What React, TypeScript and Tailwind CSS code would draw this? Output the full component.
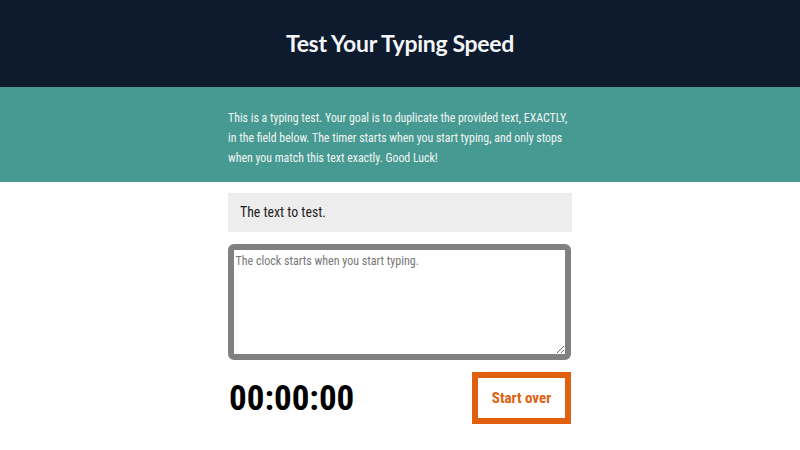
import React from "react";

const title = { fontFamily: "Lato, 'Open Sans', sans-serif" };
const body = { fontFamily: "'Roboto Condensed', Roboto, sans-serif" };

export default function App() {
  return (
    <div className="w-[800px] h-[450px] bg-white overflow-hidden" style={body}>
      <header className="h-[87px] bg-[#0e1b2f] flex items-center justify-center">
        <h1 className="text-[23px] font-bold text-[#f4f6f8] tracking-[-0.3px]" style={title}>
          Test Your Typing Speed
        </h1>
      </header>
      <section className="h-[95px] bg-[#469a92] pt-[21px]">
        <p className="w-[344px] mx-auto text-[11.85px] leading-[20px] text-[#f2f5f4] whitespace-nowrap">
          This is a typing test. Your goal is to duplicate the provided text, EXACTLY,
          <br />
          in the field below. The timer starts when you start typing, and only stops
          <br />
          when you match this text exactly. Good Luck!
        </p>
      </section>
      <main className="w-[344px] mx-auto">
        <div className="mt-[11px] h-[39px] bg-[#ededed] px-3 flex items-center text-[13.8px] text-[#222]">
          The text to test.
        </div>
        <div className="mt-[12px]">
          <textarea
            className="block w-[343px] h-[116px] border-[6px] border-[#808080] rounded-[6px] pl-[1.5px] pt-[2px] text-[12px] leading-[18px] text-[#333] placeholder:text-[#777] outline-none"
            style={body}
            placeholder="The clock starts when you start typing."
          />
        </div>
        <div className="mt-[12px] flex items-center justify-between">
          <div className="text-[35px] font-bold text-black leading-none pl-[1px]">00:00:00</div>
          <button className="w-[99px] h-[52px] mr-[1px] border-[6px] border-[#e0600f] bg-white text-[15px] font-bold text-[#e0600f]" style={body}>
            Start over
          </button>
        </div>
      </main>
    </div>
  );
}
